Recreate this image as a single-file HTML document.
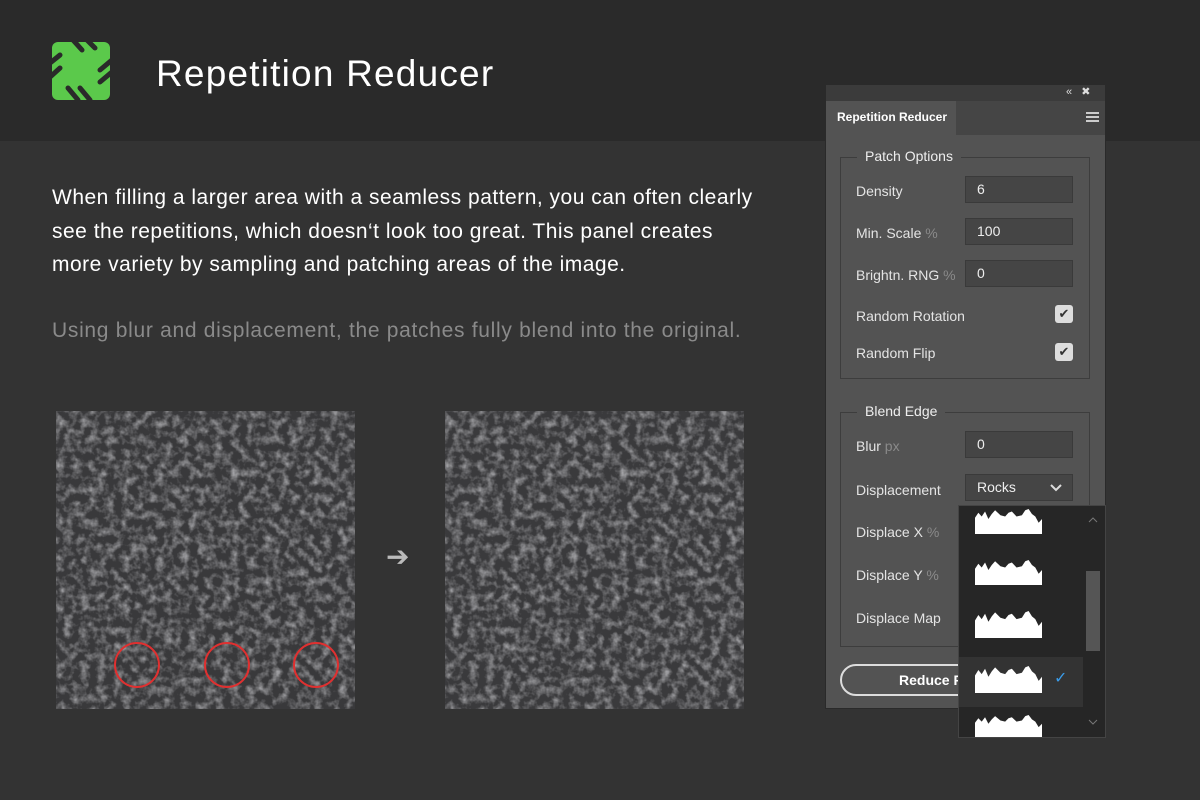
<!DOCTYPE html>
<html><head><meta charset="utf-8"><style>
*{margin:0;padding:0;box-sizing:border-box}
body{width:1200px;height:800px;background:#333;font-family:"Liberation Sans",sans-serif;position:relative;overflow:hidden}
.hdr{position:absolute;left:0;top:0;width:1200px;height:141px;background:#2a2a2a}
.abs{position:absolute}
.t{color:#fff;font-size:21px;letter-spacing:0.5px;line-height:33.5px;white-space:nowrap}
.pl{font-size:14px;color:#e4e4e4;position:absolute}
.u{color:#8a8a8a}
.in{position:absolute;left:965px;width:108px;height:27px;background:#454545;border:1px solid #3a3a3a;color:#eee;font-size:14px;padding:4px 0 0 11px}
.cb{position:absolute;left:1055px;width:18px;height:18px;background:#ddd;border-radius:3px}
.fs{position:absolute;left:840px;width:250px;border:1px solid #3d3d3d}
.leg{position:absolute;background:#535353;color:#eee;font-size:14px;padding:0 8px}
.tex{position:absolute;top:411px;width:299px;height:298px}
.circ{position:absolute;width:46px;height:46px;border:2px solid #e03030;border-radius:50%}
.blob{position:absolute;left:975px;width:67px;height:16px;background:#fff;clip-path:polygon(0 35%,5% 15%,10% 30%,15% 10%,20% 40%,25% 20%,30% 5%,38% 25%,45% 30%,50% 15%,55% 10%,62% 30%,70% 25%,75% 5%,80% 0,85% 20%,90% 30%,95% 55%,100% 40%,100% 100%,0 100%)}
</style></head><body>
<div class="hdr"></div>
<svg class="abs" style="left:52px;top:42px" width="58" height="58" viewBox="0 0 58 58">
<rect x="0" y="0" width="58" height="58" rx="6" fill="#5bc94b"/>
<g stroke="#2a2a2a" stroke-width="5" stroke-linecap="round">
<line x1="21" y1="-2" x2="30" y2="8"/><line x1="35" y1="-2" x2="43" y2="6"/>
<line x1="-2" y1="21" x2="8" y2="13"/><line x1="-2" y1="35" x2="8" y2="26"/>
<line x1="48" y1="28" x2="60" y2="18"/><line x1="48" y1="40" x2="60" y2="30"/>
<line x1="16" y1="46" x2="26" y2="58"/><line x1="28" y1="46" x2="38" y2="58"/>
</g></svg>
<div class="abs" style="left:156px;top:53px;color:#fff;font-size:37px;letter-spacing:1.2px">Repetition Reducer</div>
<div class="abs t" style="left:52px;top:181px">When filling a larger area with a seamless pattern, you can often clearly<br>see the repetitions, which doesn‘t look too great. This panel creates<br>more variety by sampling and patching areas of the image.</div>
<div class="abs t" style="left:52px;top:314px;color:#8a8a8a;letter-spacing:0.7px">Using blur and displacement, the patches fully blend into the original.</div>
<svg width="0" height="0" style="position:absolute"><filter id="n"><feTurbulence type="fractalNoise" baseFrequency="0.12" numOctaves="3" seed="3"/><feColorMatrix type="matrix" values="0 0 0 0 0.5  0 0 0 0 0.5  0 0 0 0 0.52  1.6 0 0 0 -0.65"/></filter></svg>
<svg class="tex" style="left:56px" viewBox="0 0 299 298"><rect width="299" height="298" fill="#39393b"/><rect width="299" height="298" filter="url(#n)"/></svg>
<svg class="tex" style="left:445px" viewBox="0 0 299 298"><rect width="299" height="298" fill="#3a3a3c"/><rect width="299" height="298" filter="url(#n)"/></svg>
<div class="circ" style="left:114px;top:642px"></div>
<div class="circ" style="left:204px;top:642px"></div>
<div class="circ" style="left:293px;top:642px"></div>
<div class="abs" style="left:386px;top:540px;color:#bbb;font-size:28px">➔</div>
<!-- panel -->
<div class="abs" style="left:825px;top:84px;width:281px;height:625px;background:#535353;border:1px solid #2a2a2a"></div>
<div class="abs" style="left:826px;top:85px;width:279px;height:16px;background:#3b3b3b"></div>
<div class="abs" style="left:1066px;top:85px;color:#ddd;font-size:11px">«&nbsp;&nbsp;&nbsp;✖</div>
<div class="abs" style="left:826px;top:101px;width:279px;height:34px;background:#454545"></div>
<div class="abs" style="left:826px;top:101px;width:130px;height:34px;background:#535353"></div>
<div class="abs" style="left:837px;top:110px;color:#fff;font-size:12px;font-weight:bold">Repetition Reducer</div>
<div class="abs" style="left:1086px;top:112px;width:13px;height:10px;border-top:2px solid #ccc;border-bottom:2px solid #ccc"><div style="margin-top:2px;border-top:2px solid #ccc"></div></div>
<div class="fs" style="top:157px;height:222px"></div>
<div class="leg" style="left:857px;top:148px">Patch Options</div>
<div class="pl" style="left:856px;top:183px">Density</div><div class="in" style="top:176px">6</div>
<div class="pl" style="left:856px;top:225px">Min. Scale <span class="u">%</span></div><div class="in" style="top:218px">100</div>
<div class="pl" style="left:856px;top:267px">Brightn. RNG <span class="u">%</span></div><div class="in" style="top:260px">0</div>
<div class="pl" style="left:856px;top:308px">Random Rotation</div><div class="cb" style="top:305px;color:#333;font-size:13px;text-align:center;line-height:18px">✔</div>
<div class="pl" style="left:856px;top:345px">Random Flip</div><div class="cb" style="top:343px;color:#333;font-size:13px;text-align:center;line-height:18px">✔</div>
<div class="fs" style="top:412px;height:235px"></div>
<div class="leg" style="left:857px;top:403px">Blend Edge</div>
<div class="pl" style="left:856px;top:438px">Blur <span class="u">px</span></div><div class="in" style="top:431px">0</div>
<div class="pl" style="left:856px;top:482px">Displacement</div><div class="in" style="top:474px">Rocks<svg style="position:absolute;right:10px;top:9px" width="12" height="8"><path d="M1 1 L6 6 L11 1" stroke="#ddd" stroke-width="2" fill="none"/></svg></div>
<div class="pl" style="left:856px;top:524px">Displace X <span class="u">%</span></div>
<div class="pl" style="left:856px;top:567px">Displace Y <span class="u">%</span></div>
<div class="pl" style="left:856px;top:610px">Displace Map</div>
<div class="abs" style="left:840px;top:664px;width:140px;height:32px;border:2px solid #ddd;border-radius:16px;color:#fff;font-size:14px;font-weight:bold;padding:6px 0 0 57px">Reduce R</div>
<!-- dropdown -->
<div class="abs" style="left:958px;top:505px;width:148px;height:233px;background:#262626;border:1px solid #444"></div>
<div class="abs" style="left:959px;top:657px;width:124px;height:50px;background:#333"></div>
<div class="abs" style="left:1086px;top:571px;width:14px;height:80px;background:#555"></div>
<svg class="abs" style="left:1088px;top:517px" width="10" height="6"><path d="M1 5 L5 1 L9 5" stroke="#777" fill="none"/></svg>
<svg class="abs" style="left:1088px;top:719px" width="10" height="6"><path d="M1 1 L5 5 L9 1" stroke="#777" fill="none"/></svg>
<div class="blob" style="top:509px;height:25px"></div>
<div class="blob" style="top:560px;height:25px"></div>
<div class="blob" style="top:611px;height:27px"></div>
<div class="blob" style="top:666px;height:27px"></div>
<div class="blob" style="top:715px;height:22px"></div>
<div class="abs" style="left:1054px;top:668px;color:#3a9be8;font-size:16px">✓</div>
</body></html>
